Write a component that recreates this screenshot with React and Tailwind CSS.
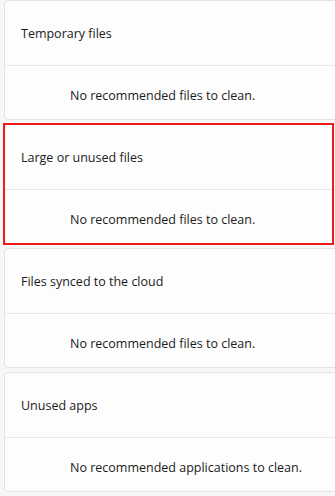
const sections = [
  { title: "Temporary files", empty: "No recommended files to clean." },
  { title: "Large or unused files", empty: "No recommended files to clean.", highlight: true },
  { title: "Files synced to the cloud", empty: "No recommended files to clean." },
  { title: "Unused apps", empty: "No recommended applications to clean." },
];

function CleanupCard({ title, empty, highlight }) {
  return (
    <div className="relative">
      <div className="rounded-[4px] border border-[#e3e3e3] bg-[#fdfdfd]">
        <div className="flex h-[64px] items-center pl-[16px] pt-[2px] text-[12.5px] text-[#1b1b1b]">
          {title}
        </div>
        <div className="flex h-[54px] items-center border-t border-[#e8e8e8] pl-[65px] pt-[7px] text-[12.5px] text-[#1b1b1b]">
          {empty}
        </div>
      </div>
      {highlight && (
        <div className="pointer-events-none absolute -top-[1px] -bottom-[1px] -left-[1px] right-[3px] border-2 border-[#f01c1c]" />
      )}
    </div>
  );
}

export default function App() {
  return (
    <div
      className="min-h-screen bg-[#f7f7f7] pl-[4px]"
      style={{ fontFamily: '"Open Sans", "Noto Sans", sans-serif' }}
    >
      <div className="flex w-[333px] flex-col gap-[4px]">
        {sections.map((s) => (
          <CleanupCard key={s.title} {...s} />
        ))}
      </div>
    </div>
  );
}
